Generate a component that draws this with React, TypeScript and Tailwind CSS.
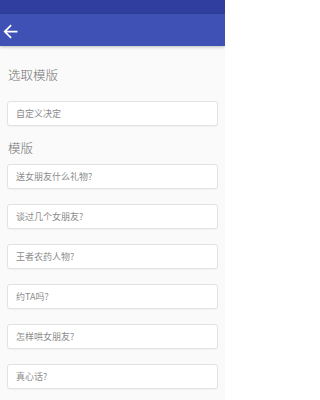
import React from 'react'

const templates = [
  '送女朋友什么礼物?',
  '谈过几个女朋友?',
  '王者农药人物?',
  '约TA吗?',
  '怎样哄女朋友?',
  '真心话?',
]

function Field({ label }: { label: string }) {
  return (
    <div className="h-[25px] mx-[7px] flex items-center px-[8px] bg-white border border-[#e3e3e3] rounded-[3px] shadow-[0_1px_1px_rgba(0,0,0,0.04)]">
      <span className="text-[9px] leading-none text-[#8c8c8c]">{label}</span>
    </div>
  )
}

export default function App() {
  return (
    <div
      className="w-[225px] h-[400px] overflow-hidden bg-[#fafafa] flex flex-col"
      style={{ fontFamily: '"Noto Sans CJK SC", "Noto Sans", sans-serif' }}
    >
      <div className="h-[14px] bg-[#303f9f] shrink-0" />
      <div className="h-[32px] bg-[#3f51b5] shrink-0 flex items-center shadow-[0_1px_3px_rgba(0,0,0,0.25)] relative z-10">
        <svg width="21" height="21" viewBox="0 0 24 24" className="ml-[0px] mt-[2px]" fill="white">
          <path d="M20 11H7.83l5.59-5.59L12 4l-8 8 8 8 1.41-1.41L7.83 13H20v-2z" />
        </svg>
      </div>

      <div className="flex flex-col pt-[16px]">
        <h1 className="px-[8px] h-[26px] leading-[26px] text-[12.5px] text-[#727272] font-light">选取模版</h1>
        <div className="mt-[13px]">
          <Field label="自定义决定" />
        </div>
        <h2 className="mt-[12px] px-[8px] h-[20px] leading-[20px] text-[12.5px] text-[#727272] font-light">模版</h2>
        <div className="mt-[6px] flex flex-col gap-[15px]">
          {templates.map((t) => (
            <Field key={t} label={t} />
          ))}
        </div>
      </div>
    </div>
  )
}
